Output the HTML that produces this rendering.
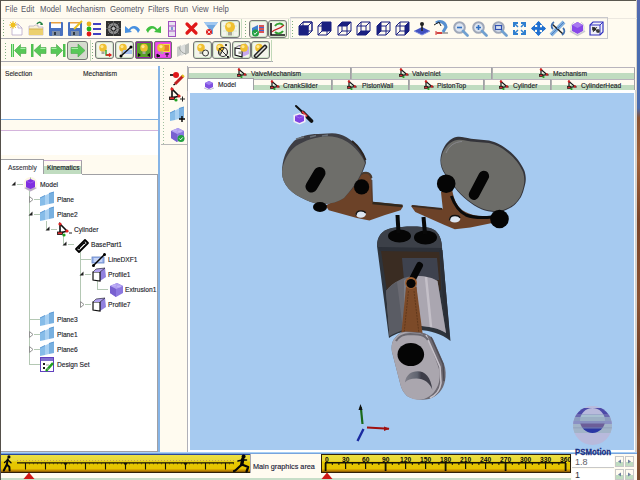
<!DOCTYPE html>
<html><head><meta charset="utf-8">
<style>
*{margin:0;padding:0;box-sizing:border-box}
html,body{width:640px;height:480px;overflow:hidden;background:#FFFBF0;position:relative;font-family:"Liberation Sans",sans-serif;}
.a{position:absolute;overflow:visible}
.t{position:absolute;font-size:8px;line-height:8px;color:#34343c;white-space:nowrap;transform-origin:0 0}
</style></head><body>
<div class="a" style="left:0px;top:0px;width:640px;height:1px;background:#5a5850;"></div>
<div class="a" style="left:0px;top:0px;width:1px;height:480px;background:#55504a;"></div>
<div class="a" style="left:637px;top:0;width:3px;height:480px;background:linear-gradient(#5a68b0 0,#4a6cb0 20px,#4a6cb0 108px,#8a5232 118px,#a06038 160px,#7a4428 220px,#8a5232 300px,#6a3c26 380px,#8a5434 440px,#7a4a2c 480px)"></div>
<div class="a" style="left:636px;top:0px;width:1px;height:480px;background:#d8d4cc;"></div>
<div class="t" style="left:5px;top:5px;transform:scaleX(0.93);color:#555564;font-size:8.3px;">File</div>
<div class="t" style="left:21px;top:5px;transform:scaleX(0.93);color:#555564;font-size:8.3px;">Edit</div>
<div class="t" style="left:40px;top:5px;transform:scaleX(0.93);color:#555564;font-size:8.3px;">Model</div>
<div class="t" style="left:66px;top:5px;transform:scaleX(0.93);color:#555564;font-size:8.3px;">Mechanism</div>
<div class="t" style="left:110px;top:5px;transform:scaleX(0.93);color:#555564;font-size:8.3px;">Geometry</div>
<div class="t" style="left:148px;top:5px;transform:scaleX(0.93);color:#555564;font-size:8.3px;">Filters</div>
<div class="t" style="left:174px;top:5px;transform:scaleX(0.93);color:#555564;font-size:8.3px;">Run</div>
<div class="t" style="left:192px;top:5px;transform:scaleX(0.93);color:#555564;font-size:8.3px;">View</div>
<div class="t" style="left:213px;top:5px;transform:scaleX(0.93);color:#555564;font-size:8.3px;">Help</div>
<div class="a" style="left:1px;top:18px;width:636px;height:1px;background:#ece8e0;"></div>
<div class="a" style="left:1px;top:38px;width:240px;height:1px;background:#a8a8b0;"></div>
<div class="a" style="left:1px;top:61px;width:272px;height:1px;background:#a8a8b0;"></div>
<div class="a" style="left:1px;top:19px;width:241px;height:20px;border-right:1px solid #c8dcc0;border-bottom:1px solid #a8a8b0"></div>
<div class="a" style="left:242px;top:19px;width:47px;height:20px;border-right:1px solid #c8dcc0;border-bottom:1px solid #b8c8b0"></div>
<div class="a" style="left:290px;top:17px;width:318px;height:22px;border:1px solid #c8c8cc;border-left:1px solid #e0e0e0"></div>
<div class="a" style="left:1px;top:40px;width:90px;height:22px;border-right:1px solid #c8dcc0;border-bottom:1px solid #a8a8b0"></div>
<div class="a" style="left:91px;top:40px;width:181px;height:22px;border-right:1px solid #c0d8b8;border-bottom:1px solid #a8a8b0"></div>
<div class="a" style="left:3px;top:20px;width:1px;height:17px;background:repeating-linear-gradient(#80b080 0 1px,transparent 1px 3px)"></div>
<div class="a" style="left:245px;top:21px;width:1px;height:16px;background:repeating-linear-gradient(#80b080 0 1px,transparent 1px 3px)"></div>
<div class="a" style="left:292px;top:21px;width:1px;height:16px;background:repeating-linear-gradient(#80b080 0 1px,transparent 1px 3px)"></div>
<div class="a" style="left:5px;top:43px;width:1px;height:16px;background:repeating-linear-gradient(#80b080 0 1px,transparent 1px 3px)"></div>
<div class="a" style="left:92px;top:43px;width:1px;height:16px;background:repeating-linear-gradient(#80b080 0 1px,transparent 1px 3px)"></div>
<svg class="a" style="left:9px;top:21px" width="15" height="15" viewBox="0 0 15 15"><path d="M3 3 L9 3 L13 7 L13 14 L3 14 Z" fill="#fff" stroke="#b8a8c8" stroke-width="0.8"/><path d="M9 3 L9 7 L13 7" fill="none" stroke="#b8a8c8" stroke-width="0.8"/><circle cx="4" cy="4" r="2.5" fill="#f0c020"/><path d="M4 0 V8 M0 4 H8 M1 1 L7 7 M7 1 L1 7" stroke="#f0c020" stroke-width="0.8"/></svg>
<svg class="a" style="left:28px;top:21px" width="17" height="15" viewBox="0 0 17 15"><path d="M1 5 L6 5 L7 4 L10 4 L10 6 L15 6 L15 14 L1 14 Z" fill="#f8f0d8" stroke="#a8a0c0" stroke-width="0.6"/><path d="M1 8 L15 8 L15 14 L1 14 Z" fill="#ecd070"/><path d="M1 8 L15 8" stroke="#d0b050"/><path d="M9 3 C10 1 12 1 13 2 L14 3" stroke="#208040" stroke-width="1.5" fill="none"/><path d="M15 4 L12 4 L14 1.5Z" fill="#208040"/></svg>
<svg class="a" style="left:48px;top:21px" width="16" height="15" viewBox="0 0 16 15"><rect x="1" y="1" width="14" height="14" rx="1" fill="#4870c0"/><rect x="3" y="1" width="10" height="6" fill="#fff"/><rect x="3" y="1" width="10" height="1.5" fill="#e8a040"/><rect x="4" y="10" width="8" height="5" fill="#8090a8"/><rect x="6" y="11" width="2" height="3" fill="#303840"/></svg>
<svg class="a" style="left:67px;top:21px" width="16" height="15" viewBox="0 0 16 15"><rect x="1" y="1" width="14" height="14" rx="1" fill="#4870c0"/><rect x="3" y="1" width="10" height="6" fill="#fff"/><rect x="3" y="1" width="10" height="1.5" fill="#e8a040"/><rect x="4" y="10" width="8" height="5" fill="#8090a8"/><rect x="6" y="11" width="2" height="3" fill="#303840"/><path d="M7 8 L15 0" stroke="#e8c020" stroke-width="2"/></svg>
<svg class="a" style="left:86px;top:21px" width="16" height="15" viewBox="0 0 16 15"><circle cx="3" cy="3" r="2.4" fill="#e8b020"/><circle cx="3" cy="8" r="2.4" fill="#20b020"/><circle cx="3" cy="13" r="2.4" fill="#e01818"/><path d="M7 3 H15 M7 8 H15 M7 13 H15" stroke="#4040c0" stroke-width="1.8"/></svg>
<svg class="a" style="left:106px;top:21px" width="15" height="15" viewBox="0 0 15 15"><rect x="0" y="0" width="15" height="15" fill="#303030"/><circle cx="7.5" cy="7.5" r="5.5" fill="#909090"/><circle cx="7.5" cy="7.5" r="3" fill="#202020"/><path d="M2 2 L13 13 M13 2 L2 13 M7.5 0 V15 M0 7.5 H15" stroke="#606060" stroke-width="1"/><circle cx="7.5" cy="7.5" r="1.5" fill="#c0c0c0"/></svg>
<svg class="a" style="left:125px;top:23px" width="16" height="11" viewBox="0 0 16 11"><path d="M3 8 C5 2 12 1 15 7 L13 10 C11 5 7 4 5 8 Z" fill="#4890e0"/><path d="M0 3 L7 9 L0 10 Z" fill="#4890e0"/></svg>
<svg class="a" style="left:144px;top:23px" width="17" height="11" viewBox="0 0 17 11"><path d="M14 8 C12 2 5 1 2 7 L4 10 C6 5 10 4 12 8 Z" fill="#40c040"/><path d="M17 3 L10 9 L17 10 Z" fill="#40c040"/></svg>
<svg class="a" style="left:168px;top:21px" width="8" height="16" viewBox="0 0 8 16"><rect x="0.5" y="0.5" width="7" height="15" fill="#e8e0f0" stroke="#a050c0" stroke-width="1"/><path d="M0.5 5 H7.5 M0.5 10 H7.5" stroke="#a050c0"/><rect x="3" y="6" width="2" height="3" fill="#8098d0"/></svg>
<svg class="a" style="left:185px;top:22px" width="13" height="13" viewBox="0 0 13 13"><path d="M2 2 L11 11 M11 2 L2 11" stroke="#e01818" stroke-width="3.2" stroke-linecap="round"/></svg>
<svg class="a" style="left:204px;top:21px" width="14" height="15" viewBox="0 0 14 15"><path d="M0 1 L14 1 L9 8 L9 13 L5 13 L5 8 Z" fill="#70a8e0"/><path d="M0 1 L14 1 L12 4 L2 4 Z" fill="#a0c8f0"/><circle cx="5" cy="11" r="3" fill="#e02020"/><path d="M3.5 9.5 L6.5 12.5 M6.5 9.5 L3.5 12.5" stroke="#fff" stroke-width="0.8"/></svg>
<div class="a" style="left:220px;top:20px;width:20px;height:18px;border:1.5px solid #767676;border-radius:3px;background:#f4f4ec;box-shadow:inset 0 0 0 1px #d0e4c8"></div>
<svg class="a" style="left:223px;top:21px" width="14" height="16" viewBox="0 0 14 16"><path d="M0 5 H14 M0 10 H14 M4 0 V16 M10 0 V16" stroke="#d0e8c8" stroke-width="0.8"/><ellipse cx="7" cy="6" rx="5" ry="5.3" fill="#f0c030"/><ellipse cx="5.8" cy="4.5" rx="2.2" ry="2.2" fill="#ffe890"/><rect x="5" y="11" width="4" height="3.5" fill="#a8a898"/></svg>
<div class="a" style="left:249px;top:20px;width:19px;height:18px;border:1.5px solid #767676;border-radius:3px;background:#f4f4ec;box-shadow:inset 0 0 0 1px #d0e4c8"></div>
<div class="a" style="left:268px;top:20px;width:19px;height:18px;border:1.5px solid #767676;border-radius:3px;background:#f4f4ec;box-shadow:inset 0 0 0 1px #d0e4c8"></div>
<svg class="a" style="left:251px;top:22px" width="15" height="14" viewBox="0 0 15 14"><path d="M1 6 L7 3 L7 13 L1 12 Z" fill="#4080d0"/><path d="M7 2 L14 2 L14 12 L7 12 Z" fill="#f0f0f0"/><path d="M8 4 H13 M8 7 H13 M8 10 H13" stroke="#d02020" stroke-width="1.4"/><path d="M8 5.5 H13 M8 8.5 H13" stroke="#2040c0" stroke-width="0.8"/><circle cx="4.5" cy="11" r="3.5" fill="#20a040"/><path d="M2.7 11 l1.3 1.3 l2.3-2.5" stroke="#fff" stroke-width="1" fill="none"/></svg>
<svg class="a" style="left:270px;top:22px" width="15" height="14" viewBox="0 0 15 14"><path d="M1 1 V13 H15" stroke="#101010" stroke-width="1.6" fill="none"/><path d="M2 10 C5 6 8 9 14 3" stroke="#c02020" stroke-width="1.2" fill="none"/><path d="M5 4 C7 1 11 1 13 3 M13 9 C11 12 7 12 5 10" stroke="#30a030" stroke-width="2" fill="none"/></svg>
<svg class="a" style="left:298px;top:21px" width="15" height="15" viewBox="0 0 15 15"><path d="M1 5 L10 5 L10 14 L1 14 Z" fill="#1a2080"/><g stroke="#1a2080" stroke-width="1" fill="none"><path d="M1 5 L10 5 L10 14 L1 14 Z M5 1 L14 1 L14 10 L5 10 Z M1 5 L5 1 M10 5 L14 1 M10 14 L14 10 M1 14 L5 10"/></g></svg>
<svg class="a" style="left:298px;top:21px" width="15" height="15" viewBox="0 0 15 15"><path d="M1 5 L5 1 L14 1 L10 5Z M10 5 L14 1 L14 10 L10 14Z" fill="none" stroke="#1a2080"/></svg>
<svg class="a" style="left:317px;top:21px" width="15" height="15" viewBox="0 0 15 15"><path d="M5 1 L14 1 L14 10 L5 10 Z" fill="#1a2080"/><g stroke="#1a2080" stroke-width="1" fill="none"><path d="M1 5 L10 5 L10 14 L1 14 Z M5 1 L14 1 L14 10 L5 10 Z M1 5 L5 1 M10 5 L14 1 M10 14 L14 10 M1 14 L5 10"/></g></svg>
<svg class="a" style="left:337px;top:21px" width="15" height="15" viewBox="0 0 15 15"><g stroke="#1a2080" stroke-width="1" fill="none"><path d="M1 5 L10 5 L10 14 L1 14 Z M5 1 L14 1 L14 10 L5 10 Z M1 5 L5 1 M10 5 L14 1 M10 14 L14 10 M1 14 L5 10"/></g></svg>
<svg class="a" style="left:337px;top:21px" width="15" height="15" viewBox="0 0 15 15"><path d="M1 5 L5 1 L14 1 L10 5 Z" fill="#1a2080"/></svg>
<svg class="a" style="left:356px;top:21px" width="15" height="15" viewBox="0 0 15 15"><path d="M1 14 L10 14 L14 10 L5 10 Z" fill="#1a2080"/><g stroke="#1a2080" stroke-width="1" fill="none"><path d="M1 5 L10 5 L10 14 L1 14 Z M5 1 L14 1 L14 10 L5 10 Z M1 5 L5 1 M10 5 L14 1 M10 14 L14 10 M1 14 L5 10"/></g></svg>
<svg class="a" style="left:376px;top:21px" width="15" height="15" viewBox="0 0 15 15"><path d="M1 5 L5 1 L5 10 L1 14 Z" fill="#1a2080"/><g stroke="#1a2080" stroke-width="1" fill="none"><path d="M1 5 L10 5 L10 14 L1 14 Z M5 1 L14 1 L14 10 L5 10 Z M1 5 L5 1 M10 5 L14 1 M10 14 L14 10 M1 14 L5 10"/></g></svg>
<svg class="a" style="left:395px;top:21px" width="15" height="15" viewBox="0 0 15 15"><g stroke="#1a2080" stroke-width="1" fill="none"><path d="M1 5 L10 5 L10 14 L1 14 Z M5 1 L14 1 L14 10 L5 10 Z M1 5 L5 1 M10 5 L14 1 M10 14 L14 10 M1 14 L5 10"/></g></svg>
<svg class="a" style="left:395px;top:21px" width="15" height="15" viewBox="0 0 15 15"><path d="M10 5 L14 1 L14 10 L10 14 Z" fill="#1a2080"/></svg>
<svg class="a" style="left:414px;top:21px" width="16" height="15" viewBox="0 0 16 15"><path d="M0 10 L8 6 L16 10 L8 14 Z" fill="#4050c0"/><path d="M0 10 L8 14 L16 10" stroke="#8090e0" fill="none"/><path d="M8 3 V10" stroke="#202020" stroke-width="1.5"/><circle cx="8" cy="3" r="2" fill="#202020"/></svg>
<svg class="a" style="left:433px;top:20px" width="16" height="17" viewBox="0 0 16 17"><path d="M3 3 C7 0 12 2 13 7 L10 12" stroke="#5890d0" stroke-width="3" fill="none"/><path d="M1 5 L6 2 L8 6" stroke="#202020" fill="none"/><path d="M3 13 L15 13" stroke="#606060"/><path d="M3 11 V15" stroke="#e02020"/><path d="M4 13 L9 13" stroke="#e02020" stroke-width="1.5"/></svg>
<svg class="a" style="left:453px;top:21px" width="16" height="16" viewBox="0 0 16 16"><circle cx="6.5" cy="6.5" r="5.3" fill="#dce4f0" stroke="#a0a8b8" stroke-width="2"/><path d="M10 10 L14.5 14.5" stroke="#70a0d0" stroke-width="2.8" stroke-linecap="round"/><path d="M4 6.5 H9" stroke="#3070c0" stroke-width="1.6"/></svg>
<svg class="a" style="left:472px;top:21px" width="16" height="16" viewBox="0 0 16 16"><circle cx="6.5" cy="6.5" r="5.3" fill="#dce4f0" stroke="#a0a8b8" stroke-width="2"/><path d="M10 10 L14.5 14.5" stroke="#70a0d0" stroke-width="2.8" stroke-linecap="round"/><path d="M4 6.5 H9 M6.5 4 V9" stroke="#3070c0" stroke-width="1.6"/></svg>
<svg class="a" style="left:492px;top:21px" width="16" height="16" viewBox="0 0 16 16"><circle cx="6.5" cy="6.5" r="5.3" fill="#dce4f0" stroke="#a0a8b8" stroke-width="2"/><path d="M10 10 L14.5 14.5" stroke="#70a0d0" stroke-width="2.8" stroke-linecap="round"/><rect x="3.5" y="4.5" width="6" height="4" fill="none" stroke="#3050b0" stroke-width="1.2"/></svg>
<svg class="a" style="left:513px;top:22px" width="13" height="13" viewBox="0 0 13 13"><path d="M0 0 H5 V2 H2 V5 H0Z M13 0 H8 V2 H11 V5 H13Z M0 13 H5 V11 H2 V8 H0Z M13 13 H8 V11 H11 V8 H13Z" fill="#3080d0"/><path d="M2 2 L5 5 M11 2 L8 5 M2 11 L5 8 M11 11 L8 8" stroke="#3080d0" stroke-width="1.5"/></svg>
<svg class="a" style="left:531px;top:21px" width="15" height="15" viewBox="0 0 15 15"><path d="M7.5 0 L11 4 H9 V6 H7.5 M7.5 15 L4 11 H6 V9 H7.5 M0 7.5 L4 4 V6 H6 V7.5 M15 7.5 L11 11 V9 H9 V7.5" fill="#2070d0"/><path d="M7.5 1 V14 M1 7.5 H14" stroke="#2070d0" stroke-width="2.6"/><path d="M7.5 0 L11 4 L4 4Z M7.5 15 L11 11 L4 11Z M0 7.5 L4 4 L4 11Z M15 7.5 L11 4 L11 11Z" fill="#2070d0"/></svg>
<svg class="a" style="left:550px;top:21px" width="16" height="15" viewBox="0 0 16 15"><path d="M1 14 L14 1" stroke="#80b0e0" stroke-width="4"/><path d="M2 3 L13 13" stroke="#202020" stroke-width="1.4"/><path d="M4 1 C1 3 1 6 3 8 M12 14 C15 12 15 9 13 7" stroke="#4070b0" stroke-width="1.8" fill="none"/><path d="M1 14 L14 1" stroke="#5080c0" stroke-width="1"/></svg>
<svg class="a" style="left:570px;top:21px" width="15" height="15" viewBox="0 0 15 15"><path d="M7.5 1 L13 4 L13 10 L7.5 13 L2 10 L2 4 Z" fill="#8848e8"/><path d="M2 4 L7.5 7 L13 4 L7.5 1Z" fill="#a878f0"/><path d="M0 10 L7.5 14.5 L15 10" stroke="#c8c8d0" stroke-width="1.5" fill="none"/><path d="M2 11 C0 7 1 3 4 1 M13 11 C15 7 14 3 11 1" stroke="#d0d0d8" fill="none"/></svg>
<svg class="a" style="left:589px;top:21px" width="15" height="15" viewBox="0 0 15 15"><path d="M4 1 L14 1 L14 11 L11 14 L1 14 L1 4 Z" fill="#f0f0f8" stroke="#3030c0" stroke-width="1.2"/><path d="M1 4 L11 4 L11 14 M11 4 L14 1" stroke="#3030c0" fill="none"/><circle cx="5" cy="8" r="2" fill="#303030"/><circle cx="9" cy="10" r="2" fill="#505050"/><path d="M3 6 L10 11 M8 6 L4 11" stroke="#202020" stroke-width="0.8"/></svg>
<svg class="a" style="left:11px;top:43px" width="16" height="15" viewBox="0 0 16 15"><rect x="0" y="1" width="3" height="13" fill="#50c050"/><rect x="1" y="1" width="1" height="13" fill="#b0f0b0"/><path d="M3.5 7.5 L9.5 1.5 L9.5 4.5 L15 4.5 L15 10.5 L9.5 10.5 L9.5 13.5 Z" fill="#58c858" stroke="#48a848" stroke-width="0.6" stroke-linejoin="round"/><path d="M9.5 5.5 H14.5" stroke="#a8f0a8" stroke-width="1"/></svg>
<svg class="a" style="left:31px;top:43px" width="16" height="15" viewBox="0 0 16 15"><rect x="0" y="1" width="2.5" height="13" fill="#50c050"/><path d="M3 7.5 L9.5 1.5 L9.5 4.5 L15 4.5 L15 10.5 L9.5 10.5 L9.5 13.5 Z" fill="#58c858" stroke="#48a848" stroke-width="0.6" stroke-linejoin="round"/><path d="M9.5 5.5 H14.5" stroke="#a8f0a8" stroke-width="1"/></svg>
<svg class="a" style="left:50px;top:43px" width="16" height="15" viewBox="0 0 16 15"><rect x="13" y="1" width="2.5" height="13" fill="#50c050"/><path d="M12.5 7.5 L6.5 1.5 L6.5 4.5 L1 4.5 L1 10.5 L6.5 10.5 L6.5 13.5 Z" fill="#58c858" stroke="#48a848" stroke-width="0.6" stroke-linejoin="round"/><path d="M1.5 5.5 H6.5" stroke="#a8f0a8" stroke-width="1"/></svg>
<div class="a" style="left:67px;top:41px;width:21px;height:19px;border:1.5px solid #767676;border-radius:3px;background:#d8d8d0;box-shadow:inset 0 0 0 1px #d0e4c8"></div>
<svg class="a" style="left:70px;top:43px" width="16" height="15" viewBox="0 0 16 15"><path d="M15 7.5 L8 1 L8 4.5 L1 4.5 L1 10.5 L8 10.5 L8 14 Z" fill="#58c858" stroke="#48a848" stroke-width="0.6" stroke-linejoin="round"/><path d="M1.5 5.5 H8" stroke="#a8f0a8"/></svg>
<div class="a" style="left:95px;top:41px;width:19px;height:18px;border:1.5px solid #767676;border-radius:3px;background:#f4f4ec;box-shadow:inset 0 0 0 1px #d0e4c8"></div>
<div class="a" style="left:115px;top:41px;width:19px;height:18px;border:1.5px solid #767676;border-radius:3px;background:#f4f4ec;box-shadow:inset 0 0 0 1px #d0e4c8"></div>
<svg class="a" style="left:97px;top:43px" width="15" height="14" viewBox="0 0 15 14"><ellipse cx="6" cy="4.8" rx="3.8" ry="4" fill="#f0c030"/><ellipse cx="5" cy="3.6" rx="1.6" ry="1.6" fill="#ffe890"/><rect x="4.5" y="8.5" width="3" height="2.5" fill="#a8a898"/><path d="M9 7 V12 H14" stroke="#20a020" stroke-width="1.3" fill="none"/><path d="M9 12 H14 M12 10.5 L14 12 L12 13.5" stroke="#e02020" stroke-width="1.3" fill="none"/></svg>
<svg class="a" style="left:117px;top:43px" width="15" height="14" viewBox="0 0 15 14"><ellipse cx="6" cy="4.8" rx="3.8" ry="4" fill="#f0c030"/><ellipse cx="5" cy="3.6" rx="1.6" ry="1.6" fill="#ffe890"/><rect x="4.5" y="8.5" width="3" height="2.5" fill="#a8a898"/><rect x="6" y="7" width="9" height="4" fill="#a8c0f0"/><path d="M4 13 L14 4" stroke="#101010" stroke-width="1.4"/><circle cx="4" cy="13" r="1.5" fill="#000"/><circle cx="14" cy="4" r="1.5" fill="#000"/></svg>
<div class="a" style="left:135px;top:41px;width:18px;height:18px;border:1.5px solid #707070;border-radius:2px;background:#8a2a9a"></div>
<div class="a" style="left:137px;top:43px;width:14px;height:14px;background:#58a028;"></div>
<svg class="a" style="left:138px;top:43px" width="12" height="14" viewBox="0 0 12 14"><ellipse cx="6" cy="4.8" rx="3.8" ry="4" fill="#f0c030"/><ellipse cx="5" cy="3.6" rx="1.6" ry="1.6" fill="#ffe890"/><rect x="4.5" y="8.5" width="3" height="2.5" fill="#a8a898"/><path d="M0 10 L3 12 L0 14Z M12 10 L9 12 L12 14Z" fill="#101010"/></svg>
<div class="a" style="left:154px;top:41px;width:18px;height:18px;border:1.5px solid #707070;border-radius:2px;background:#e040e0"></div>
<svg class="a" style="left:156px;top:43px" width="14" height="14" viewBox="0 0 14 14"><rect x="0" y="0" width="14" height="14" fill="#e850e8"/><rect x="6" y="1" width="8" height="8" fill="#f0e040"/><path d="M7 3 H13 M7 5 H13 M7 7 H13" stroke="#e02020"/><ellipse cx="5" cy="4.8" rx="3.8" ry="4" fill="#f0c030"/><ellipse cx="5" cy="3.6" rx="1.6" ry="1.6" fill="#ffe890"/><rect x="4.5" y="8.5" width="3" height="2.5" fill="#a8a898"/><path d="M1 11 L4 13 L1 14Z M9 11 H13 M11 10 V14" stroke="#101010" fill="#101010"/></svg>
<svg class="a" style="left:176px;top:43px" width="14" height="15" viewBox="0 0 14 15"><path d="M1 4 L5 2 L5 12 L1 14 Z" fill="#c8ccc8"/><path d="M5 3 L9 1 L9 11 L5 13 Z" fill="#dcdedc"/><path d="M9 2 L13 0 L13 10 L9 12 Z" fill="#b8bcb8"/><path d="M3 4 C4 8 6 10 10 11" stroke="#a0a4a0" fill="none"/></svg>
<div class="a" style="left:193px;top:41px;width:19px;height:18px;border:1.5px solid #767676;border-radius:3px;background:#f4f4ec;box-shadow:inset 0 0 0 1px #d0e4c8"></div>
<div class="a" style="left:212px;top:41px;width:19px;height:18px;border:1.5px solid #767676;border-radius:3px;background:#f4f4ec;box-shadow:inset 0 0 0 1px #d0e4c8"></div>
<div class="a" style="left:232px;top:41px;width:19px;height:18px;border:1.5px solid #767676;border-radius:3px;background:#f4f4ec;box-shadow:inset 0 0 0 1px #d0e4c8"></div>
<div class="a" style="left:251px;top:41px;width:19px;height:18px;border:1.5px solid #767676;border-radius:3px;background:#f4f4ec;box-shadow:inset 0 0 0 1px #d0e4c8"></div>
<svg class="a" style="left:195px;top:43px" width="15" height="14" viewBox="0 0 15 14"><ellipse cx="6" cy="4.8" rx="3.8" ry="4" fill="#f0c030"/><ellipse cx="5" cy="3.6" rx="1.6" ry="1.6" fill="#ffe890"/><rect x="4.5" y="8.5" width="3" height="2.5" fill="#a8a898"/><circle cx="10.5" cy="10" r="3" fill="none" stroke="#303030" stroke-width="1"/></svg>
<svg class="a" style="left:214px;top:43px" width="15" height="15" viewBox="0 0 15 15"><ellipse cx="6" cy="4.8" rx="3.8" ry="4" fill="#f0c030"/><ellipse cx="5" cy="3.6" rx="1.6" ry="1.6" fill="#ffe890"/><rect x="4.5" y="8.5" width="3" height="2.5" fill="#a8a898"/><circle cx="9" cy="9" r="4.5" fill="none" stroke="#303030" stroke-width="1.2"/><path d="M5 5 L14 14 M10 5 L6 12" stroke="#303030"/><circle cx="14" cy="14" r="1" fill="#000"/><circle cx="12" cy="2" r="1" fill="#000"/></svg>
<svg class="a" style="left:234px;top:43px" width="15" height="15" viewBox="0 0 15 15"><path d="M4 3 L12 1 L15 4 L15 11 L8 14 L8 6 Z" fill="#c8a8f0"/><path d="M1 5 L8 6 L8 14 L1 12 Z" fill="#fff" stroke="#101010" stroke-width="1.1"/><path d="M1 5 L4 3 L12 1 L8 6" fill="none" stroke="#303030" stroke-width="0.6"/><ellipse cx="10" cy="4.8" rx="3.8" ry="4" fill="#f0c030"/><ellipse cx="9" cy="3.6" rx="1.6" ry="1.6" fill="#ffe890"/><rect x="4.5" y="8.5" width="3" height="2.5" fill="#a8a898"/></svg>
<svg class="a" style="left:253px;top:43px" width="15" height="15" viewBox="0 0 15 15"><ellipse cx="6" cy="4.8" rx="3.8" ry="4" fill="#f0c030"/><ellipse cx="5" cy="3.6" rx="1.6" ry="1.6" fill="#ffe890"/><rect x="4.5" y="8.5" width="3" height="2.5" fill="#a8a898"/><path d="M3 13 L12 4" stroke="#202020" stroke-width="4.5" stroke-linecap="round"/><path d="M3 13 L12 4" stroke="#e0e0e0" stroke-width="1.5" stroke-linecap="round"/></svg>
<div class="a" style="left:1px;top:62px;width:157px;height:4px;background:#FFFBF0;"></div>
<div class="a" style="left:1px;top:66px;width:157px;height:3px;background:#ffffff;"></div>
<div class="a" style="left:1px;top:69px;width:157px;height:11px;background:#FFFBF0;"></div>
<div class="t" style="left:5px;top:70px;transform:scaleX(0.83);color:#28282e;font-size:8px;-webkit-text-stroke:0.15px #28282e">Selection</div>
<div class="t" style="left:83px;top:70px;transform:scaleX(0.83);color:#28282e;font-size:8px;-webkit-text-stroke:0.15px #28282e">Mechanism</div>
<div class="a" style="left:1px;top:80px;width:157px;height:39px;background:#ffffff;"></div>
<div class="a" style="left:1px;top:119px;width:157px;height:1px;background:#7fb0e4;"></div>
<div class="a" style="left:1px;top:130px;width:157px;height:1px;background:#d4b4dc;"></div>
<div class="a" style="left:1px;top:131px;width:157px;height:24px;background:#ffffff;"></div>
<div class="a" style="left:158px;top:66px;width:2px;height:387px;background:#86b4e6;"></div>
<div class="a" style="left:1px;top:159px;width:43px;height:16px;background:#fff;border-top:1px solid #a0a0a4;border-right:1px solid #a0a0a4"></div>
<div class="t" style="left:8px;top:164px;transform:scaleX(0.83);color:#303038;font-size:8px;-webkit-text-stroke:0.1px #303038">Assembly</div>
<div class="a" style="left:44px;top:160px;width:38px;height:14px;background:linear-gradient(#FFFBF0 0,#FFFBF0 5px,#C0DCC0 5px);border-top:1px solid #c8a8d0;border-right:1px solid #a0a0a4"></div>
<div class="t" style="left:47px;top:164px;transform:scaleX(0.83);color:#202028;font-size:8px;-webkit-text-stroke:0.15px #202028">Kinematics</div>
<div class="a" style="left:1px;top:174px;width:157px;height:278px;background:#fff;border-right:1px solid #a0a0a4;border-bottom:1px solid #a0a0a4"></div>
<div class="a" style="left:82px;top:174px;width:76px;height:1px;background:#a0a0a4;"></div>
<div class="a" style="left:1px;top:175px;width:43px;height:1px;background:#fff;"></div>
<div class="a" style="left:29px;top:191px;width:1px;height:174px;background:#b4c8b4"></div>
<div class="a" style="left:46px;top:221px;width:1px;height:9px;background:#b4c8b4"></div>
<div class="a" style="left:63px;top:236px;width:1px;height:9px;background:#b4c8b4"></div>
<div class="a" style="left:80px;top:251px;width:1px;height:54px;background:#b4c8b4"></div>
<div class="a" style="left:97px;top:281px;width:1px;height:9px;background:#b4c8b4"></div>
<div class="a" style="left:17px;top:184px;width:6px;height:1px;background:#b4c8b4"></div>
<svg class="a" style="left:11px;top:181px" width="5" height="5" viewBox="0 0 5 5"><path d="M4.5 0.5 L4.5 4.5 L0.5 4.5 Z" fill="#202020"/></svg>
<svg class="a" style="left:23px;top:177px" width="16" height="16" viewBox="0 0 16 16"><circle cx="7.5" cy="7" r="7" fill="#fdf6e4"/><path d="M1 11 L7.5 14.5 L14 11 L7.5 9 Z" fill="#b8a8c8"/><path d="M3 4 L7.5 2 L12 4 L12 10 L7.5 12 L3 10 Z" fill="#8030e0"/><path d="M3 4 L7.5 6 L12 4" stroke="#a060f0" stroke-width="0.8" fill="none"/><path d="M7.5 0.5 V2" stroke="#a0c0a0"/></svg>
<div class="t" style="left:40px;top:181px;transform:scaleX(0.83);color:#202028;font-size:8px;-webkit-text-stroke:0.15px #202028">Model</div>
<div class="a" style="left:34px;top:199px;width:6px;height:1px;background:#b4c8b4"></div>
<svg class="a" style="left:29px;top:196px" width="5" height="7" viewBox="0 0 5 7"><path d="M0.5 0.5 L4 3.5 L0.5 6.5 Z" fill="none" stroke="#909090" stroke-width="1"/></svg>
<svg class="a" style="left:40px;top:192px" width="16" height="16" viewBox="0 0 16 16"><path d="M0 6 L5 3.5 L5 13 L0 14 Z" fill="#86bce8"/><path d="M5 3.5 L9 1.5 L9 12 L5 13 Z" fill="#a8d0f2"/><path d="M9 1.5 L14 0 L14 11 L9 12 Z" fill="#78b0e0"/><path d="M0 6 L5 3.5 M9 1.5 L14 0" stroke="#5a98d4" stroke-width="1"/></svg>
<div class="t" style="left:57px;top:196px;transform:scaleX(0.83);color:#202028;font-size:8px;-webkit-text-stroke:0.15px #202028">Plane</div>
<div class="a" style="left:34px;top:214px;width:6px;height:1px;background:#b4c8b4"></div>
<svg class="a" style="left:28px;top:211px" width="5" height="5" viewBox="0 0 5 5"><path d="M4.5 0.5 L4.5 4.5 L0.5 4.5 Z" fill="#202020"/></svg>
<svg class="a" style="left:40px;top:207px" width="16" height="16" viewBox="0 0 16 16"><path d="M0 6 L5 3.5 L5 13 L0 14 Z" fill="#86bce8"/><path d="M5 3.5 L9 1.5 L9 12 L5 13 Z" fill="#a8d0f2"/><path d="M9 1.5 L14 0 L14 11 L9 12 Z" fill="#78b0e0"/><path d="M0 6 L5 3.5 M9 1.5 L14 0" stroke="#5a98d4" stroke-width="1"/></svg>
<div class="t" style="left:57px;top:211px;transform:scaleX(0.83);color:#202028;font-size:8px;-webkit-text-stroke:0.15px #202028">Plane2</div>
<div class="a" style="left:51px;top:229px;width:6px;height:1px;background:#b4c8b4"></div>
<svg class="a" style="left:45px;top:226px" width="5" height="5" viewBox="0 0 5 5"><path d="M4.5 0.5 L4.5 4.5 L0.5 4.5 Z" fill="#202020"/></svg>
<svg class="a" style="left:57px;top:222px" width="16" height="16" viewBox="0 0 16 16"><path d="M3 2 L3 11 L10 9 Z" fill="none" stroke="#101010" stroke-width="1.6"/><circle cx="3" cy="2" r="1.6" fill="#e02020"/><circle cx="10" cy="9" r="1.6" fill="#e02020"/><rect x="0.5" y="10" width="5" height="2.5" fill="#e03030" stroke="#101010" stroke-width="0.8"/><circle cx="7" cy="13" r="1.6" fill="#20a020"/><path d="M12 11 L15 11" stroke="#202020"/></svg>
<div class="t" style="left:74px;top:226px;transform:scaleX(0.83);color:#202028;font-size:8px;-webkit-text-stroke:0.15px #202028">Cylinder</div>
<div class="a" style="left:68px;top:244px;width:6px;height:1px;background:#b4c8b4"></div>
<svg class="a" style="left:62px;top:241px" width="5" height="5" viewBox="0 0 5 5"><path d="M4.5 0.5 L4.5 4.5 L0.5 4.5 Z" fill="#202020"/></svg>
<svg class="a" style="left:74px;top:237px" width="16" height="16" viewBox="0 0 16 16"><path d="M2 12 L11 3 L14 6 L5 15 Z" fill="#fff" stroke="#000" stroke-width="1.8" stroke-linejoin="round"/><path d="M5 11 L10 6" stroke="#000" stroke-width="1.2"/><circle cx="5" cy="11.5" r="1" fill="#000"/><circle cx="10.5" cy="6" r="1" fill="#000"/></svg>
<div class="t" style="left:91px;top:241px;transform:scaleX(0.83);color:#202028;font-size:8px;-webkit-text-stroke:0.15px #202028">BasePart1</div>
<div class="a" style="left:80px;top:259px;width:11px;height:1px;background:#b4c8b4"></div>
<svg class="a" style="left:91px;top:252px" width="16" height="16" viewBox="0 0 16 16"><rect x="1" y="5" width="12" height="6" fill="#a0b8f0" stroke="#6080c0" stroke-width="0.8"/><path d="M3 7 h8 M3 9 h8" stroke="#fff" stroke-width="0.8"/><path d="M2 14 L14 2" stroke="#000" stroke-width="1.5"/><circle cx="2.5" cy="13.5" r="1.5" fill="#000"/><circle cx="13.5" cy="2.5" r="1.5" fill="#000"/></svg>
<div class="t" style="left:108px;top:256px;transform:scaleX(0.83);color:#202028;font-size:8px;-webkit-text-stroke:0.15px #202028">LineDXF1</div>
<div class="a" style="left:85px;top:274px;width:6px;height:1px;background:#b4c8b4"></div>
<svg class="a" style="left:79px;top:271px" width="5" height="5" viewBox="0 0 5 5"><path d="M4.5 0.5 L4.5 4.5 L0.5 4.5 Z" fill="#202020"/></svg>
<svg class="a" style="left:91px;top:267px" width="16" height="16" viewBox="0 0 16 16"><path d="M5 2 L14 1 L15 10 L9 14 Z" fill="#9080e0"/><path d="M2 5 L9 5 L9 14 L2 13 Z" fill="#fff" stroke="#101010" stroke-width="1.2"/><path d="M2 5 L5 2 L14 1 L9 5" fill="#b0a0f0" stroke="#202020" stroke-width="0.6"/></svg>
<div class="t" style="left:108px;top:271px;transform:scaleX(0.83);color:#202028;font-size:8px;-webkit-text-stroke:0.15px #202028">Profile1</div>
<div class="a" style="left:97px;top:289px;width:11px;height:1px;background:#b4c8b4"></div>
<svg class="a" style="left:108px;top:282px" width="16" height="16" viewBox="0 0 16 16"><path d="M2 4 L9 1 L15 4 L15 11 L8 15 L2 11 Z" fill="#8c78e0"/><path d="M2 4 L8 7 L15 4 L9 1Z" fill="#b0a0f0"/><path d="M8 7 L8 15 L2 11 L2 4Z" fill="#7860d0"/><ellipse cx="6" cy="3.5" rx="2" ry="1" fill="#c0b0f8"/><ellipse cx="11" cy="4.5" rx="2" ry="1" fill="#c0b0f8"/></svg>
<div class="t" style="left:125px;top:286px;transform:scaleX(0.83);color:#202028;font-size:8px;-webkit-text-stroke:0.15px #202028">Extrusion1</div>
<div class="a" style="left:85px;top:304px;width:6px;height:1px;background:#b4c8b4"></div>
<svg class="a" style="left:80px;top:301px" width="5" height="7" viewBox="0 0 5 7"><path d="M0.5 0.5 L4 3.5 L0.5 6.5 Z" fill="none" stroke="#909090" stroke-width="1"/></svg>
<svg class="a" style="left:91px;top:297px" width="16" height="16" viewBox="0 0 16 16"><path d="M5 2 L14 1 L15 10 L9 14 Z" fill="#9080e0"/><path d="M2 5 L9 5 L9 14 L2 13 Z" fill="#fff" stroke="#101010" stroke-width="1.2"/><path d="M2 5 L5 2 L14 1 L9 5" fill="#b0a0f0" stroke="#202020" stroke-width="0.6"/></svg>
<div class="t" style="left:108px;top:301px;transform:scaleX(0.83);color:#202028;font-size:8px;-webkit-text-stroke:0.15px #202028">Profile7</div>
<div class="a" style="left:29px;top:319px;width:11px;height:1px;background:#b4c8b4"></div>
<svg class="a" style="left:40px;top:312px" width="16" height="16" viewBox="0 0 16 16"><path d="M0 6 L5 3.5 L5 13 L0 14 Z" fill="#86bce8"/><path d="M5 3.5 L9 1.5 L9 12 L5 13 Z" fill="#a8d0f2"/><path d="M9 1.5 L14 0 L14 11 L9 12 Z" fill="#78b0e0"/><path d="M0 6 L5 3.5 M9 1.5 L14 0" stroke="#5a98d4" stroke-width="1"/></svg>
<div class="t" style="left:57px;top:316px;transform:scaleX(0.83);color:#202028;font-size:8px;-webkit-text-stroke:0.15px #202028">Plane3</div>
<div class="a" style="left:34px;top:334px;width:6px;height:1px;background:#b4c8b4"></div>
<svg class="a" style="left:29px;top:331px" width="5" height="7" viewBox="0 0 5 7"><path d="M0.5 0.5 L4 3.5 L0.5 6.5 Z" fill="none" stroke="#909090" stroke-width="1"/></svg>
<svg class="a" style="left:40px;top:327px" width="16" height="16" viewBox="0 0 16 16"><path d="M0 6 L5 3.5 L5 13 L0 14 Z" fill="#86bce8"/><path d="M5 3.5 L9 1.5 L9 12 L5 13 Z" fill="#a8d0f2"/><path d="M9 1.5 L14 0 L14 11 L9 12 Z" fill="#78b0e0"/><path d="M0 6 L5 3.5 M9 1.5 L14 0" stroke="#5a98d4" stroke-width="1"/></svg>
<div class="t" style="left:57px;top:331px;transform:scaleX(0.83);color:#202028;font-size:8px;-webkit-text-stroke:0.15px #202028">Plane1</div>
<div class="a" style="left:34px;top:349px;width:6px;height:1px;background:#b4c8b4"></div>
<svg class="a" style="left:29px;top:346px" width="5" height="7" viewBox="0 0 5 7"><path d="M0.5 0.5 L4 3.5 L0.5 6.5 Z" fill="none" stroke="#909090" stroke-width="1"/></svg>
<svg class="a" style="left:40px;top:342px" width="16" height="16" viewBox="0 0 16 16"><path d="M0 6 L5 3.5 L5 13 L0 14 Z" fill="#86bce8"/><path d="M5 3.5 L9 1.5 L9 12 L5 13 Z" fill="#a8d0f2"/><path d="M9 1.5 L14 0 L14 11 L9 12 Z" fill="#78b0e0"/><path d="M0 6 L5 3.5 M9 1.5 L14 0" stroke="#5a98d4" stroke-width="1"/></svg>
<div class="t" style="left:57px;top:346px;transform:scaleX(0.83);color:#202028;font-size:8px;-webkit-text-stroke:0.15px #202028">Plane6</div>
<div class="a" style="left:29px;top:364px;width:11px;height:1px;background:#b4c8b4"></div>
<svg class="a" style="left:40px;top:357px" width="16" height="16" viewBox="0 0 16 16"><rect x="0.5" y="0.5" width="13" height="14" fill="#fff" stroke="#6040c0" stroke-width="1"/><rect x="1" y="1" width="12" height="3" fill="#8070d0"/><path d="M3 6 l2 2 M5 6 l-2 2 M3 10 l2 2 M5 10 l-2 2" stroke="#000" stroke-width="0.9"/><path d="M6 14 L13 6" stroke="#20a020" stroke-width="2.5"/><path d="M6 8 h3 M7 12 h2" stroke="#a0a0a0"/></svg>
<div class="t" style="left:57px;top:361px;transform:scaleX(0.83);color:#202028;font-size:8px;-webkit-text-stroke:0.15px #202028">Design Set</div>
<div class="a" style="left:163px;top:68px;width:1px;height:76px;background:repeating-linear-gradient(#a0c0a0 0 1px,transparent 1px 3px)"></div>
<div class="a" style="left:161px;top:144px;width:26px;height:1px;background:#b8b8b8;"></div>
<div class="a" style="left:187px;top:66px;width:1px;height:387px;background:#b0b0b8;"></div>
<svg class="a" style="left:169px;top:71px" width="16" height="14" viewBox="0 0 16 14"><path d="M1 4 L6 4" stroke="#000" stroke-width="1.6"/><circle cx="7" cy="4" r="3" fill="#e01818"/><path d="M6 13 L14 5" stroke="#c02020" stroke-width="3"/><path d="M13 4 L15 6" stroke="#e0c020" stroke-width="2"/><path d="M6 13 L4.5 14" stroke="#000" stroke-width="1.5"/></svg>
<svg class="a" style="left:169px;top:87px" width="17" height="16" viewBox="0 0 17 16"><path d="M3 2 L3 11 L10 9 Z" fill="none" stroke="#101010" stroke-width="1.6"/><circle cx="3" cy="2" r="1.6" fill="#e02020"/><circle cx="10" cy="9" r="1.6" fill="#e02020"/><rect x="0.5" y="10" width="5" height="2.5" fill="#e03030" stroke="#101010" stroke-width="0.8"/><circle cx="7" cy="13" r="1.6" fill="#20a020"/><path d="M11 12 L16 12 M13.5 9.5 L13.5 14.5" stroke="#202020"/></svg>
<svg class="a" style="left:170px;top:107px" width="15" height="16" viewBox="0 0 15 16"><path d="M0 6 L5 3.5 L5 13 L0 14 Z" fill="#86bce8"/><path d="M5 3.5 L9 1.5 L9 12 L5 13 Z" fill="#a8d0f2"/><path d="M9 1.5 L14 0 L14 11 L9 12 Z" fill="#78b0e0"/><path d="M0 6 L5 3.5 M9 1.5 L14 0" stroke="#5a98d4" stroke-width="1"/><path d="M9 12 L15 12 M12 9 L12 15" stroke="#000" stroke-width="1.4"/></svg>
<svg class="a" style="left:169px;top:127px" width="16" height="15" viewBox="0 0 16 15"><path d="M2 4 L9 1 L15 4 L15 11 L8 15 L2 11 Z" fill="#8878e0"/><path d="M2 4 L8 7 L15 4 L9 1Z" fill="#b0a0f0"/><path d="M8 7 L8 15 L2 11 L2 4Z" fill="#7860d0"/><ellipse cx="6" cy="3.5" rx="2" ry="1" fill="#c0b0f8"/><ellipse cx="11" cy="4.5" rx="2" ry="1" fill="#c0b0f8"/><circle cx="12" cy="11.5" r="3.5" fill="#20a040"/><path d="M10.3 11.5 l1.3 1.3 l2.2-2.4" stroke="#fff" stroke-width="1" fill="none"/></svg>
<div class="a" style="left:188px;top:67px;width:446px;height:12px;background:#FFFBF0;"></div>
<div class="a" style="left:188px;top:67px;width:163px;height:12px;background:linear-gradient(#FFFBF0 0,#FFFBF0 5px,#C0DCC0 5px);border-top:1px solid #b8b4bc;border-left:1px solid #b0b0b0;border-right:1px solid #a0a0a4"></div>
<svg class="a" style="left:237px;top:68px" width="10" height="10" viewBox="0 0 10 10"><path d="M2 1.5 L2 7.5 L8 6.5 Z" fill="none" stroke="#101010" stroke-width="1.2"/><circle cx="2" cy="1.5" r="1.2" fill="#d02020"/><circle cx="8" cy="6.5" r="1.2" fill="#d02020"/><rect x="0.3" y="6.5" width="3.5" height="2" fill="#d03030" stroke="#101010" stroke-width="0.6"/><circle cx="4.5" cy="9" r="1.1" fill="#20a020"/><path d="M8.5 7 L10 7" stroke="#303030" stroke-width="0.8"/></svg>
<div class="t" style="left:251px;top:70px;transform:scaleX(0.83);color:#222228;font-size:8px;-webkit-text-stroke:0.15px #222228">ValveMechanism</div>
<div class="a" style="left:351px;top:67px;width:141px;height:12px;background:linear-gradient(#FFFBF0 0,#FFFBF0 5px,#C0DCC0 5px);border-top:1px solid #b8b4bc;border-left:1px solid #b0b0b0;border-right:1px solid #a0a0a4"></div>
<svg class="a" style="left:399px;top:68px" width="10" height="10" viewBox="0 0 10 10"><path d="M2 1.5 L2 7.5 L8 6.5 Z" fill="none" stroke="#101010" stroke-width="1.2"/><circle cx="2" cy="1.5" r="1.2" fill="#d02020"/><circle cx="8" cy="6.5" r="1.2" fill="#d02020"/><rect x="0.3" y="6.5" width="3.5" height="2" fill="#d03030" stroke="#101010" stroke-width="0.6"/><circle cx="4.5" cy="9" r="1.1" fill="#20a020"/><path d="M8.5 7 L10 7" stroke="#303030" stroke-width="0.8"/></svg>
<div class="t" style="left:412px;top:70px;transform:scaleX(0.83);color:#222228;font-size:8px;-webkit-text-stroke:0.15px #222228">ValveInlet</div>
<div class="a" style="left:492px;top:67px;width:143px;height:12px;background:linear-gradient(#FFFBF0 0,#FFFBF0 5px,#C0DCC0 5px);border-top:1px solid #b8b4bc;border-left:1px solid #b0b0b0;border-right:1px solid #a0a0a4"></div>
<svg class="a" style="left:539px;top:68px" width="10" height="10" viewBox="0 0 10 10"><path d="M2 1.5 L2 7.5 L8 6.5 Z" fill="none" stroke="#101010" stroke-width="1.2"/><circle cx="2" cy="1.5" r="1.2" fill="#d02020"/><circle cx="8" cy="6.5" r="1.2" fill="#d02020"/><rect x="0.3" y="6.5" width="3.5" height="2" fill="#d03030" stroke="#101010" stroke-width="0.6"/><circle cx="4.5" cy="9" r="1.1" fill="#20a020"/><path d="M8.5 7 L10 7" stroke="#303030" stroke-width="0.8"/></svg>
<div class="t" style="left:553px;top:70px;transform:scaleX(0.83);color:#222228;font-size:8px;-webkit-text-stroke:0.15px #222228">Mechanism</div>
<div class="a" style="left:253px;top:79px;width:79px;height:12px;background:linear-gradient(#FFFBF0 0,#FFFBF0 5px,#C0DCC0 5px);border-top:1px solid #b8b4bc;border-left:1px solid #b0b0b0;border-right:1px solid #a0a0a4"></div>
<svg class="a" style="left:270px;top:80px" width="10" height="10" viewBox="0 0 10 10"><path d="M2 1.5 L2 7.5 L8 6.5 Z" fill="none" stroke="#101010" stroke-width="1.2"/><circle cx="2" cy="1.5" r="1.2" fill="#d02020"/><circle cx="8" cy="6.5" r="1.2" fill="#d02020"/><rect x="0.3" y="6.5" width="3.5" height="2" fill="#d03030" stroke="#101010" stroke-width="0.6"/><circle cx="4.5" cy="9" r="1.1" fill="#20a020"/><path d="M8.5 7 L10 7" stroke="#303030" stroke-width="0.8"/></svg>
<div class="t" style="left:283px;top:82px;transform:scaleX(0.83);color:#222228;font-size:8px;-webkit-text-stroke:0.15px #222228">CrankSlider</div>
<div class="a" style="left:332px;top:79px;width:77px;height:12px;background:linear-gradient(#FFFBF0 0,#FFFBF0 5px,#C0DCC0 5px);border-top:1px solid #b8b4bc;border-left:1px solid #b0b0b0;border-right:1px solid #a0a0a4"></div>
<svg class="a" style="left:347px;top:80px" width="10" height="10" viewBox="0 0 10 10"><path d="M2 1.5 L2 7.5 L8 6.5 Z" fill="none" stroke="#101010" stroke-width="1.2"/><circle cx="2" cy="1.5" r="1.2" fill="#d02020"/><circle cx="8" cy="6.5" r="1.2" fill="#d02020"/><rect x="0.3" y="6.5" width="3.5" height="2" fill="#d03030" stroke="#101010" stroke-width="0.6"/><circle cx="4.5" cy="9" r="1.1" fill="#20a020"/><path d="M8.5 7 L10 7" stroke="#303030" stroke-width="0.8"/></svg>
<div class="t" style="left:362px;top:82px;transform:scaleX(0.83);color:#222228;font-size:8px;-webkit-text-stroke:0.15px #222228">PistonWall</div>
<div class="a" style="left:409px;top:79px;width:75px;height:12px;background:linear-gradient(#FFFBF0 0,#FFFBF0 5px,#C0DCC0 5px);border-top:1px solid #b8b4bc;border-left:1px solid #b0b0b0;border-right:1px solid #a0a0a4"></div>
<svg class="a" style="left:424px;top:80px" width="10" height="10" viewBox="0 0 10 10"><path d="M2 1.5 L2 7.5 L8 6.5 Z" fill="none" stroke="#101010" stroke-width="1.2"/><circle cx="2" cy="1.5" r="1.2" fill="#d02020"/><circle cx="8" cy="6.5" r="1.2" fill="#d02020"/><rect x="0.3" y="6.5" width="3.5" height="2" fill="#d03030" stroke="#101010" stroke-width="0.6"/><circle cx="4.5" cy="9" r="1.1" fill="#20a020"/><path d="M8.5 7 L10 7" stroke="#303030" stroke-width="0.8"/></svg>
<div class="t" style="left:437px;top:82px;transform:scaleX(0.83);color:#222228;font-size:8px;-webkit-text-stroke:0.15px #222228">PistonTop</div>
<div class="a" style="left:484px;top:79px;width:67px;height:12px;background:linear-gradient(#FFFBF0 0,#FFFBF0 5px,#C0DCC0 5px);border-top:1px solid #b8b4bc;border-left:1px solid #b0b0b0;border-right:1px solid #a0a0a4"></div>
<svg class="a" style="left:499px;top:80px" width="10" height="10" viewBox="0 0 10 10"><path d="M2 1.5 L2 7.5 L8 6.5 Z" fill="none" stroke="#101010" stroke-width="1.2"/><circle cx="2" cy="1.5" r="1.2" fill="#d02020"/><circle cx="8" cy="6.5" r="1.2" fill="#d02020"/><rect x="0.3" y="6.5" width="3.5" height="2" fill="#d03030" stroke="#101010" stroke-width="0.6"/><circle cx="4.5" cy="9" r="1.1" fill="#20a020"/><path d="M8.5 7 L10 7" stroke="#303030" stroke-width="0.8"/></svg>
<div class="t" style="left:513px;top:82px;transform:scaleX(0.83);color:#222228;font-size:8px;-webkit-text-stroke:0.15px #222228">Cylinder</div>
<div class="a" style="left:551px;top:79px;width:84px;height:12px;background:linear-gradient(#FFFBF0 0,#FFFBF0 5px,#C0DCC0 5px);border-top:1px solid #b8b4bc;border-left:1px solid #b0b0b0;border-right:1px solid #a0a0a4"></div>
<svg class="a" style="left:567px;top:80px" width="10" height="10" viewBox="0 0 10 10"><path d="M2 1.5 L2 7.5 L8 6.5 Z" fill="none" stroke="#101010" stroke-width="1.2"/><circle cx="2" cy="1.5" r="1.2" fill="#d02020"/><circle cx="8" cy="6.5" r="1.2" fill="#d02020"/><rect x="0.3" y="6.5" width="3.5" height="2" fill="#d03030" stroke="#101010" stroke-width="0.6"/><circle cx="4.5" cy="9" r="1.1" fill="#20a020"/><path d="M8.5 7 L10 7" stroke="#303030" stroke-width="0.8"/></svg>
<div class="t" style="left:581px;top:82px;transform:scaleX(0.83);color:#222228;font-size:8px;-webkit-text-stroke:0.15px #222228">CylinderHead</div>
<div class="a" style="left:187px;top:78px;width:67px;height:13px;background:#fff;border:1px solid #a0a0a4;border-bottom:none"></div>
<svg class="a" style="left:204px;top:80px" width="10" height="10" viewBox="0 0 10 10"><path d="M5 1 L9 3 L9 7 L5 9 L1 7 L1 3 Z" fill="#8050e0"/><path d="M1 3 L5 5 L9 3 L5 1Z" fill="#a080f0"/><path d="M0 8 L5 10 L10 8" stroke="#c0c0d0" fill="none"/></svg>
<div class="t" style="left:218px;top:81px;transform:scaleX(0.83);color:#222228;font-size:8px;-webkit-text-stroke:0.15px #222228">Model</div>
<div class="a" style="left:188px;top:90px;width:448px;height:363px;background:#ffffff;"></div>
<div class="a" style="left:190px;top:93px;width:444px;height:357px;background:#A6CAF0;"></div>
<div class="a" style="left:635px;top:90px;width:1px;height:363px;background:#d0d0d0;"></div>
<svg class="a" style="left:0;top:0" width="640" height="480" viewBox="0 0 640 480"><path d="M296 106 L304 113.5" stroke="#101010" stroke-width="2" stroke-linecap="round"/><path d="M303 112.5 L311.5 121" stroke="#101010" stroke-width="3.8" stroke-linecap="round"/><path d="M302 111.5 L307 116.5" stroke="#d83838" stroke-width="2"/><path d="M293.5 115 L299.5 113 L305.5 115 L305.5 122 L299.5 124.5 L293.5 122 Z" fill="#f4f0f8"/><path d="M295 116 L299.5 114.5 L304 116 L304 121 L299.5 123 L295 121 Z" fill="#8040e0"/><path d="M295 116 L299.5 118 L304 116" stroke="#a070f0" stroke-width="0.8" fill="none"/><path d="M325.6 205.6 L340 198 L352 187 L357 178 C359 174 362 172.5 366 172.8 C369 173 371 175 371.5 178 L372.5 201.7 L402.2 204.8 L403 206.5 L400.6 210.3 L385 215 L369.4 220.5 L356.9 218 L328.75 210.3 Z" fill="#6c4228"/><path d="M358 177 C360 174 363 172.8 366 172.8 C369 173 371 175 371.5 178" stroke="#4a3a2e" stroke-width="2" fill="none"/><path d="M372.5 203 L402.5 206" stroke="#30281e" stroke-width="2.6"/><path d="M371.8 180 L372.3 202" stroke="#4a3020" stroke-width="1"/><ellipse cx="360.8" cy="214.2" rx="5" ry="3.5" fill="#dce6f2"/><path d="M356 215.5 C356 212 358 210.8 361 210.8 C363.5 210.8 365 211.5 365.6 213" stroke="#101010" stroke-width="1.3" fill="none"/><path d="M282 172 C282 160 286 149 294 141 C300 136 308 134 318 134 L332 133.3 C342 133.5 352 139 359 148 C364 154 366 158 366 163 C362 176 355 187 344 198 C334 205 318 206 306 200 C292 194 282 185 282 172 Z" fill="#3e3e44"/><path d="M282 172 C283 162 288 152 296 146 C305 140 316 137 325 136.4 C332 136 340 137.5 347.5 142 C355 147 362 155 365 163 C361 176 355 186 344 198 C334 205 318 206 306 200 C292 194 282 185 282 172 Z" fill="#6e6e6a"/><path d="M296 139 L304 137 M310 137 L316 135.5 M322 136 L328 135" stroke="#6a7078" stroke-width="1.6"/><path d="M352 141 C358 146 363 153 365.5 160" stroke="#2c2420" stroke-width="2" fill="none"/><path d="M319.5 173 L311.5 186.5" stroke="#050505" stroke-width="12" stroke-linecap="round"/><ellipse cx="320" cy="207" rx="7" ry="5" fill="#050505"/><circle cx="361.6" cy="186.9" r="7.6" fill="#050505"/><path d="M411 206 L412 205.2 L442.8 208.7 L441 192.3 L446 186 L452.25 190.6 C454 200 457 206 462 210 C470 215 480 217 491 217 L500 218 L502 223 L491 223.3 L470.3 227.6 L454.8 229.3 L444.5 225 L415.3 212.1 Z" fill="#6c4228"/><path d="M412 205.8 L442 209" stroke="#3a2a20" stroke-width="1.8"/><path d="M451.4 196 C455 206 460 212 466 215 C474 218 483 218 492 217" stroke="#0a0a0a" stroke-width="3" fill="none"/><ellipse cx="454.8" cy="219" rx="5.5" ry="3.5" fill="#dce6f2"/><path d="M449.5 220.5 C449.5 217 452 215.5 455 215.5 C457.5 215.5 459.5 216.5 460 218" stroke="#101010" stroke-width="1.3" fill="none"/><path d="M440.4 160 C441 152 444 145 450 140 C454 137 456 136.5 459 136.7 C463 137 466 137.5 471 138.8 L489 140.6 C496 142 503 146 508 150 C516 156 521 163 524.5 171 C526 176 526 180 525.4 183 C524 190 522 195 521 197 C517 203 514 206 510 208 C505 211 500 212.5 496 212.3 C490 212 486 211 482 209.6 C476 207 472 204 468 201 C462 196 458 192 455.5 188.4 C451 183 447 178 444.8 174 C442 170 440.3 165 440.4 160 Z" fill="#34343a"/><path d="M441 161 C441.5 153 445 147 450 143 C454 140.5 457 139.5 460 139.8 C464 140 467 141 471 141.5 L489 143 C496 144.5 502 148 507 152 C515 158 520 165 523 172 C524.5 177 524.5 181 524 184 C523 190 521 195 520 197 C516 203 513 205.5 509 207.5 C504 210 500 211.5 496 211.3 C490 211 486 210 482 208.6 C476 206 472 203 468 200 C462 195 458 191 455.5 187.4 C451 182 447 177 445 173 C442.5 169 441 165 441 161 Z" fill="#6c6c68"/><path d="M446 153 C449 146 454 142 462 141.5" stroke="#8a8a90" stroke-width="0.9" fill="none"/><path d="M483.8 176 L474 194.6" stroke="#050505" stroke-width="10.6" stroke-linecap="round"/><circle cx="446.2" cy="183.7" r="9.3" fill="#050505"/><circle cx="499.5" cy="219" r="9.3" fill="#050505"/><path d="M377 246 C377 236 382 230 392 228 C405 226 420 226 430 228 C437 230 441.5 236 442 247 L450.5 341 C442 334 430 330 418 330 C406 330 396 333 389 338 Z" fill="#2e343c"/><path d="M378.5 247 L441.5 248 L442 252 L379 251 Z" fill="#2c3038"/><path d="M381 251 L439.5 252 L441 290 L387 292 Z" fill="#3a2c22"/><path d="M402 258 L437 258 L439 280 L404 280 Z" fill="#3e424e"/><path d="M439.5 250 L442.5 250 L450 339 L446 336 Z" fill="#2a2e36"/><path d="M377 246 C377 236 382 230 392 228 C405 226 420 226 430 228 C437 230 441.5 236 442 248 L378 247 Z" fill="#3c4048"/><ellipse cx="399.5" cy="236" rx="11.5" ry="6.5" fill="#050505"/><ellipse cx="425.5" cy="237.5" rx="11.5" ry="7" fill="#050505"/><path d="M386 291 C393 282 404 276 416 276 C426 276 433 278 437.5 281 L446 333 C438 328 428 326 418 326 C406 326 396 330 389.5 336 Z" fill="#6a6a72"/><path d="M416 276 C426 276 433 278 437.5 281 L446 333 C438 328 428 326 418 326 Z" fill="#aaa6b0"/><path d="M426 277 L431 327" stroke="#c4c0c8" stroke-width="2.5"/><path d="M386 291 C389 287 393 284 397 282 L403 330 C398 332 393 334 389.5 336 Z" fill="#5a5c64"/><path d="M404 280 C408 278 412 277 416 276 L418 326 C413 326 408 327 404 329 Z" fill="#7c7c84"/><path d="M419.5 265.5 L411 282" stroke="#050505" stroke-width="7" stroke-linecap="round"/><path d="M406 287 L416.5 287 L423 337 L401 337 Z" fill="#7c4a28"/><path d="M408.5 291 L404 334 M414 291 L419 334" stroke="#5a3418" stroke-width="0.8" stroke-dasharray="2 1"/><circle cx="411" cy="283" r="6" fill="#a06030"/><circle cx="411" cy="283.5" r="4.6" fill="#050505"/><path d="M397.5 215 L398.5 233" stroke="#080808" stroke-width="4"/><path d="M423.5 217 L425 234" stroke="#080808" stroke-width="4"/><path d="M395 338 C398 334 402 331.5 407 331.5 L421 332.5 C426 333 430 335.5 433 339 L444 364 C446 369 446 376 445 381 C443 390 438 396 429 399 C421 401 412 399 407 396 C403 392 401 388 400 383 L392 352 C391 346 392 341 395 338 Z" fill="#6e6a72"/><path d="M395 338 C398 334 401 332 405 332 L417 333 C422 333 425 336 428 339 L438 366 C440 371 440 378 439 382 C437 390 432 396 424 399 C417 401 412 399 407 396 C403 392 401 388 400 383 L392 352 C391 346 392 341 395 338 Z" fill="#aaa6ae"/><path d="M426 335 L440 367 L441 383 C440 390 436 395 430 398" stroke="#c4c0c8" stroke-width="1.6" fill="none"/><path d="M431 337 L443 364 L444 381" stroke="#4e4c54" stroke-width="1.4" fill="none"/><path d="M396 341 C399 336 404 334 410 334 L418 334.5 C423 335 426 337 428 340" stroke="#6a6870" stroke-width="2.2" fill="none"/><ellipse cx="410.8" cy="354.5" rx="13.3" ry="11.6" fill="#050505"/><defs><linearGradient id="cres" x1="0" y1="0" x2="1" y2="0"><stop offset="0" stop-color="#80808a"/><stop offset="0.45" stop-color="#606470"/><stop offset="0.6" stop-color="#3c3c48"/><stop offset="1" stop-color="#40404a"/></linearGradient></defs><path d="M404.9 382.5 C406 375 411 371.2 417.7 371.2 C425 371.2 431 377 432.3 389.8 C430 383 424 378.5 416.2 378.5 C411 378.5 407 380 404.9 382.5 Z" fill="url(#cres)"/><path d="M362.5 424 L360.8 407" stroke="#1a6a1a" stroke-width="2.2"/><path d="M360.5 404 L358.5 410 L362.5 410 Z" fill="#101010"/><path d="M367 427.5 L389 428.8" stroke="#a01010" stroke-width="2"/><path d="M389.5 428.8 L384 426.5 L384 431 Z" fill="#a01010"/><path d="M363.5 429 L357.5 441" stroke="#1a2aa0" stroke-width="2.4"/><defs><clipPath id="lg"><circle cx="592.5" cy="425.5" r="19.5"/></clipPath><clipPath id="lgi"><circle cx="592.5" cy="420.5" r="12.5"/></clipPath></defs><g clip-path="url(#lg)"><rect x="572" y="405" width="41" height="41" fill="#b8badc"/><rect x="572" y="408" width="41" height="6" fill="#4c4aa8"/><rect x="572" y="414" width="41" height="3" fill="#6a68b0"/><rect x="572" y="417" width="41" height="4" fill="#8c9cc0"/><rect x="572" y="421" width="41" height="3" fill="#8a90c4"/><rect x="572" y="424" width="41" height="9" fill="#a2b4c8"/><rect x="572" y="427" width="41" height="1.5" fill="#98a8c0"/></g><g clip-path="url(#lgi)"><rect x="579" y="407" width="27" height="7.5" fill="#b8badc"/><rect x="579" y="414.5" width="27" height="3" fill="#a8c0d0"/><rect x="579" y="417.5" width="27" height="3.5" fill="#9cb0c4"/><rect x="579" y="421" width="27" height="2.5" fill="#8890c0"/><rect x="579" y="423.5" width="27" height="4" fill="#6c5e98"/><rect x="579" y="427.5" width="27" height="1.5" fill="#5058a8"/><rect x="579" y="429" width="27" height="5" fill="#2a36a4"/></g></svg>
<div class="a" style="left:1px;top:452px;width:636px;height:1px;background:#a8d0f6;"></div>
<div class="a" style="left:1px;top:453px;width:636px;height:1px;background:#78a4dc;"></div>
<div class="a" style="left:1px;top:454px;width:250px;height:1px;background:#2a4898;"></div>
<svg class="a" style="left:1px;top:455px" width="250" height="18" viewBox="0 0 250 18"><defs><linearGradient id="yg" x1="0" y1="0" x2="0" y2="1"><stop offset="0" stop-color="#ece040"/><stop offset="0.33" stop-color="#e8d838"/><stop offset="0.42" stop-color="#e6c800"/><stop offset="0.8" stop-color="#e6c400"/><stop offset="0.9" stop-color="#c89000"/><stop offset="1" stop-color="#805000"/></linearGradient></defs><rect x="0" y="0" width="250" height="17" fill="url(#yg)"/><rect x="0" y="17" width="250" height="1" fill="#302008"/><path d="M16 5.5 H233" stroke="#c8a048" stroke-width="1" stroke-dasharray="1 2"/><path d="M16 7.8 H233" stroke="#101008" stroke-width="1.3"/><path d="M24.5 8 V14.5" stroke="#101008" stroke-width="1.1"/><path d="M28.5 8 V9.3" stroke="#403010" stroke-width="0.8"/><path d="M32.5 8 V9.3" stroke="#403010" stroke-width="0.8"/><path d="M36.5 8 V9.3" stroke="#403010" stroke-width="0.8"/><path d="M40.5 8 V9.3" stroke="#403010" stroke-width="0.8"/><path d="M44.5 8 V14.5" stroke="#101008" stroke-width="1.1"/><path d="M48.5 8 V9.3" stroke="#403010" stroke-width="0.8"/><path d="M52.5 8 V9.3" stroke="#403010" stroke-width="0.8"/><path d="M56.5 8 V9.3" stroke="#403010" stroke-width="0.8"/><path d="M60.5 8 V9.3" stroke="#403010" stroke-width="0.8"/><path d="M64.5 8 V14.5" stroke="#101008" stroke-width="1.1"/><path d="M62.5 8 L66.5 8 L64.5 11 Z" fill="#101008"/><path d="M68.5 8 V9.3" stroke="#403010" stroke-width="0.8"/><path d="M72.5 8 V9.3" stroke="#403010" stroke-width="0.8"/><path d="M76.5 8 V9.3" stroke="#403010" stroke-width="0.8"/><path d="M80.5 8 V9.3" stroke="#403010" stroke-width="0.8"/><path d="M84.5 8 V14.5" stroke="#101008" stroke-width="1.1"/><path d="M88.5 8 V9.3" stroke="#403010" stroke-width="0.8"/><path d="M92.5 8 V9.3" stroke="#403010" stroke-width="0.8"/><path d="M96.5 8 V9.3" stroke="#403010" stroke-width="0.8"/><path d="M100.5 8 V9.3" stroke="#403010" stroke-width="0.8"/><path d="M104.5 8 V14.5" stroke="#101008" stroke-width="1.1"/><path d="M108.5 8 V9.3" stroke="#403010" stroke-width="0.8"/><path d="M112.5 8 V9.3" stroke="#403010" stroke-width="0.8"/><path d="M116.5 8 V9.3" stroke="#403010" stroke-width="0.8"/><path d="M120.5 8 V9.3" stroke="#403010" stroke-width="0.8"/><path d="M124.5 8 V14.5" stroke="#101008" stroke-width="1.1"/><path d="M122.5 8 L126.5 8 L124.5 11 Z" fill="#101008"/><path d="M128.5 8 V9.3" stroke="#403010" stroke-width="0.8"/><path d="M132.5 8 V9.3" stroke="#403010" stroke-width="0.8"/><path d="M136.5 8 V9.3" stroke="#403010" stroke-width="0.8"/><path d="M140.5 8 V9.3" stroke="#403010" stroke-width="0.8"/><path d="M144.5 8 V14.5" stroke="#101008" stroke-width="1.1"/><path d="M148.5 8 V9.3" stroke="#403010" stroke-width="0.8"/><path d="M152.5 8 V9.3" stroke="#403010" stroke-width="0.8"/><path d="M156.5 8 V9.3" stroke="#403010" stroke-width="0.8"/><path d="M160.5 8 V9.3" stroke="#403010" stroke-width="0.8"/><path d="M164.5 8 V14.5" stroke="#101008" stroke-width="1.1"/><path d="M168.5 8 V9.3" stroke="#403010" stroke-width="0.8"/><path d="M172.5 8 V9.3" stroke="#403010" stroke-width="0.8"/><path d="M176.5 8 V9.3" stroke="#403010" stroke-width="0.8"/><path d="M180.5 8 V9.3" stroke="#403010" stroke-width="0.8"/><path d="M184.5 8 V14.5" stroke="#101008" stroke-width="1.1"/><path d="M182.5 8 L186.5 8 L184.5 11 Z" fill="#101008"/><path d="M188.5 8 V9.3" stroke="#403010" stroke-width="0.8"/><path d="M192.5 8 V9.3" stroke="#403010" stroke-width="0.8"/><path d="M196.5 8 V9.3" stroke="#403010" stroke-width="0.8"/><path d="M200.5 8 V9.3" stroke="#403010" stroke-width="0.8"/><path d="M204.5 8 V14.5" stroke="#101008" stroke-width="1.1"/><path d="M208.5 8 V9.3" stroke="#403010" stroke-width="0.8"/><path d="M212.5 8 V9.3" stroke="#403010" stroke-width="0.8"/><path d="M216.5 8 V9.3" stroke="#403010" stroke-width="0.8"/><path d="M220.5 8 V9.3" stroke="#403010" stroke-width="0.8"/><path d="M224.5 8 V14.5" stroke="#101008" stroke-width="1.1"/><path d="M228.5 8 V9.3" stroke="#403010" stroke-width="0.8"/><path d="M232.5 8 V9.3" stroke="#403010" stroke-width="0.8"/><g fill="none" stroke="#060606" stroke-linecap="round" stroke-linejoin="round"><circle cx="7.9" cy="1.9" r="1.6" fill="#060606" stroke="none"/><path d="M6.8 4.2 L5.8 9.5 L2.8 15.5 M5.8 9.5 L8.4 12 L8.6 15.5" stroke-width="2"/><path d="M6.8 4.8 L3.5 7.5 M6.8 4.8 L10 7.8" stroke-width="1.4"/></g><g fill="none" stroke="#060606" stroke-linecap="round" stroke-linejoin="round"><circle cx="242.6" cy="1.4" r="2" fill="#060606" stroke="none"/><path d="M241.8 4 L240.8 9.5" stroke-width="3.4"/><path d="M240.8 9.5 L234.3 15.5 L233 16 M240.8 9.5 L247.2 12 L245.5 16.5" stroke-width="2.2"/><path d="M241 5 L237 6 M242 5 L245.5 5" stroke-width="1.6"/></g></svg>
<div class="a" style="left:250px;top:454px;width:1px;height:26px;background:#a8a8b0;"></div>
<div class="t" style="left:253px;top:463px;transform:scaleX(0.91);color:#202038;font-size:8px;-webkit-text-stroke:0.15px #202038">Main graphics area</div>
<svg class="a" style="left:321px;top:454px" width="250" height="19" viewBox="0 0 250 19"><rect x="0" y="0" width="250" height="19" fill="#302008"/><rect x="1" y="1" width="248" height="17" fill="url(#yg)"/><path d="M4 8.8 H245" stroke="#101008" stroke-width="1.4"/><path d="M4.6 9 V17" stroke="#101008" stroke-width="1.8"/><path d="M11.3 9 V11" stroke="#101008" stroke-width="1"/><path d="M17.9 9 V11" stroke="#101008" stroke-width="1"/><path d="M24.6 9 V15" stroke="#101008" stroke-width="1.2"/><path d="M31.3 9 V11" stroke="#101008" stroke-width="1"/><path d="M37.9 9 V11" stroke="#101008" stroke-width="1"/><path d="M44.6 9 V15" stroke="#101008" stroke-width="1.2"/><path d="M51.3 9 V11" stroke="#101008" stroke-width="1"/><path d="M57.9 9 V11" stroke="#101008" stroke-width="1"/><path d="M64.6 9 V17" stroke="#101008" stroke-width="1.8"/><path d="M71.3 9 V11" stroke="#101008" stroke-width="1"/><path d="M77.9 9 V11" stroke="#101008" stroke-width="1"/><path d="M84.6 9 V15" stroke="#101008" stroke-width="1.2"/><path d="M91.3 9 V11" stroke="#101008" stroke-width="1"/><path d="M97.9 9 V11" stroke="#101008" stroke-width="1"/><path d="M104.6 9 V15" stroke="#101008" stroke-width="1.2"/><path d="M111.3 9 V11" stroke="#101008" stroke-width="1"/><path d="M117.9 9 V11" stroke="#101008" stroke-width="1"/><path d="M124.6 9 V17" stroke="#101008" stroke-width="1.8"/><path d="M131.3 9 V11" stroke="#101008" stroke-width="1"/><path d="M137.9 9 V11" stroke="#101008" stroke-width="1"/><path d="M144.6 9 V15" stroke="#101008" stroke-width="1.2"/><path d="M151.3 9 V11" stroke="#101008" stroke-width="1"/><path d="M157.9 9 V11" stroke="#101008" stroke-width="1"/><path d="M164.6 9 V15" stroke="#101008" stroke-width="1.2"/><path d="M171.3 9 V11" stroke="#101008" stroke-width="1"/><path d="M177.9 9 V11" stroke="#101008" stroke-width="1"/><path d="M184.6 9 V17" stroke="#101008" stroke-width="1.8"/><path d="M191.3 9 V11" stroke="#101008" stroke-width="1"/><path d="M197.9 9 V11" stroke="#101008" stroke-width="1"/><path d="M204.6 9 V15" stroke="#101008" stroke-width="1.2"/><path d="M211.3 9 V11" stroke="#101008" stroke-width="1"/><path d="M217.9 9 V11" stroke="#101008" stroke-width="1"/><path d="M224.6 9 V15" stroke="#101008" stroke-width="1.2"/><path d="M231.3 9 V11" stroke="#101008" stroke-width="1"/><path d="M237.9 9 V11" stroke="#101008" stroke-width="1"/><path d="M244.6 9 V17" stroke="#101008" stroke-width="1.8"/></svg>
<div class="t" style="left:325.3px;top:455.5px;transform:scaleX(0.95);color:#0a0a04;font-size:7px;font-weight:bold;letter-spacing:0.1px;line-height:7px">0</div>
<div class="t" style="left:342.0px;top:455.5px;transform:scaleX(0.95);color:#0a0a04;font-size:7px;font-weight:bold;letter-spacing:0.1px;line-height:7px">30</div>
<div class="t" style="left:362.0px;top:455.5px;transform:scaleX(0.95);color:#0a0a04;font-size:7px;font-weight:bold;letter-spacing:0.1px;line-height:7px">60</div>
<div class="t" style="left:382.0px;top:455.5px;transform:scaleX(0.95);color:#0a0a04;font-size:7px;font-weight:bold;letter-spacing:0.1px;line-height:7px">90</div>
<div class="t" style="left:400.20000000000005px;top:455.5px;transform:scaleX(0.95);color:#0a0a04;font-size:7px;font-weight:bold;letter-spacing:0.1px;line-height:7px">120</div>
<div class="t" style="left:420.20000000000005px;top:455.5px;transform:scaleX(0.95);color:#0a0a04;font-size:7px;font-weight:bold;letter-spacing:0.1px;line-height:7px">150</div>
<div class="t" style="left:440.20000000000005px;top:455.5px;transform:scaleX(0.95);color:#0a0a04;font-size:7px;font-weight:bold;letter-spacing:0.1px;line-height:7px">180</div>
<div class="t" style="left:460.20000000000005px;top:455.5px;transform:scaleX(0.95);color:#0a0a04;font-size:7px;font-weight:bold;letter-spacing:0.1px;line-height:7px">210</div>
<div class="t" style="left:480.20000000000005px;top:455.5px;transform:scaleX(0.95);color:#0a0a04;font-size:7px;font-weight:bold;letter-spacing:0.1px;line-height:7px">240</div>
<div class="t" style="left:500.20000000000005px;top:455.5px;transform:scaleX(0.95);color:#0a0a04;font-size:7px;font-weight:bold;letter-spacing:0.1px;line-height:7px">270</div>
<div class="t" style="left:520.2px;top:455.5px;transform:scaleX(0.95);color:#0a0a04;font-size:7px;font-weight:bold;letter-spacing:0.1px;line-height:7px">300</div>
<div class="t" style="left:540.2px;top:455.5px;transform:scaleX(0.95);color:#0a0a04;font-size:7px;font-weight:bold;letter-spacing:0.1px;line-height:7px">330</div>
<div class="t" style="left:560.2px;top:455.5px;transform:scaleX(0.95);color:#0a0a04;font-size:7px;font-weight:bold;letter-spacing:0.1px;line-height:7px">360</div>
<div class="a" style="left:571px;top:454px;width:66px;height:26px;background:#FFFBF0;"></div>
<div class="a" style="left:572px;top:455px;width:42px;height:13px;background:#ffffff;"></div>
<div class="a" style="left:572px;top:469px;width:42px;height:11px;background:#ffffff;"></div>
<div class="a" style="left:572px;top:467px;width:42px;height:1px;background:#c8c8c8;"></div>
<div class="t" style="left:575px;top:458px;transform:scaleX(1);color:#606068;font-size:9px;line-height:9px">1.8</div>
<div class="t" style="left:575px;top:471px;transform:scaleX(1);color:#303038;font-size:9px;line-height:9px">1</div>
<div class="a" style="left:615px;top:456px;width:9px;height:11px;border:1px solid #c8c8c8;background:linear-gradient(#FFFBF0 0,#FFFBF0 5px,#C0DCC0 5px)"></div>
<div class="a" style="left:625px;top:456px;width:9px;height:11px;border:1px solid #c8c8c8;background:linear-gradient(#FFFBF0 0,#FFFBF0 5px,#C0DCC0 5px)"></div>
<div class="a" style="left:615px;top:469px;width:9px;height:11px;border:1px solid #c8c8c8;background:linear-gradient(#FFFBF0 0,#FFFBF0 5px,#C0DCC0 5px)"></div>
<div class="a" style="left:625px;top:469px;width:9px;height:11px;border:1px solid #c8c8c8;background:linear-gradient(#FFFBF0 0,#FFFBF0 5px,#C0DCC0 5px)"></div>
<svg class="a" style="left:617px;top:459px" width="5" height="5" viewBox="0 0 5 5"><path d="M4 0.5 L1 2.5 L4 4.5Z" fill="#7080a0"/></svg>
<svg class="a" style="left:627px;top:459px" width="5" height="5" viewBox="0 0 5 5"><path d="M1 0.5 L4 2.5 L1 4.5Z" fill="#7080a0"/></svg>
<svg class="a" style="left:617px;top:472px" width="5" height="5" viewBox="0 0 5 5"><path d="M4 0.5 L1 2.5 L4 4.5Z" fill="#7080a0"/></svg>
<svg class="a" style="left:627px;top:472px" width="5" height="5" viewBox="0 0 5 5"><path d="M1 0.5 L4 2.5 L1 4.5Z" fill="#7080a0"/></svg>
<div class="a" style="left:1px;top:473px;width:570px;height:5px;background:#FFFBF0;"></div>
<div class="a" style="left:1px;top:478px;width:570px;height:2px;background:#C8DEC8;"></div>
<svg class="a" style="left:23px;top:472px" width="12" height="7" viewBox="0 0 12 7"><path d="M6 0.5 L11.5 7 L0.5 7Z" fill="#d01818"/></svg>
<svg class="a" style="left:321px;top:472px" width="12" height="7" viewBox="0 0 12 7"><path d="M6 0.5 L11.5 7 L0.5 7Z" fill="#d01818"/></svg>
<div class="t" style="left:575px;top:447px;transform:scaleX(0.8);color:#1a2e80;font-size:9.8px;font-weight:bold;line-height:10px;-webkit-text-stroke:0.3px #1a2e80">PSMotion</div>
</body></html>
